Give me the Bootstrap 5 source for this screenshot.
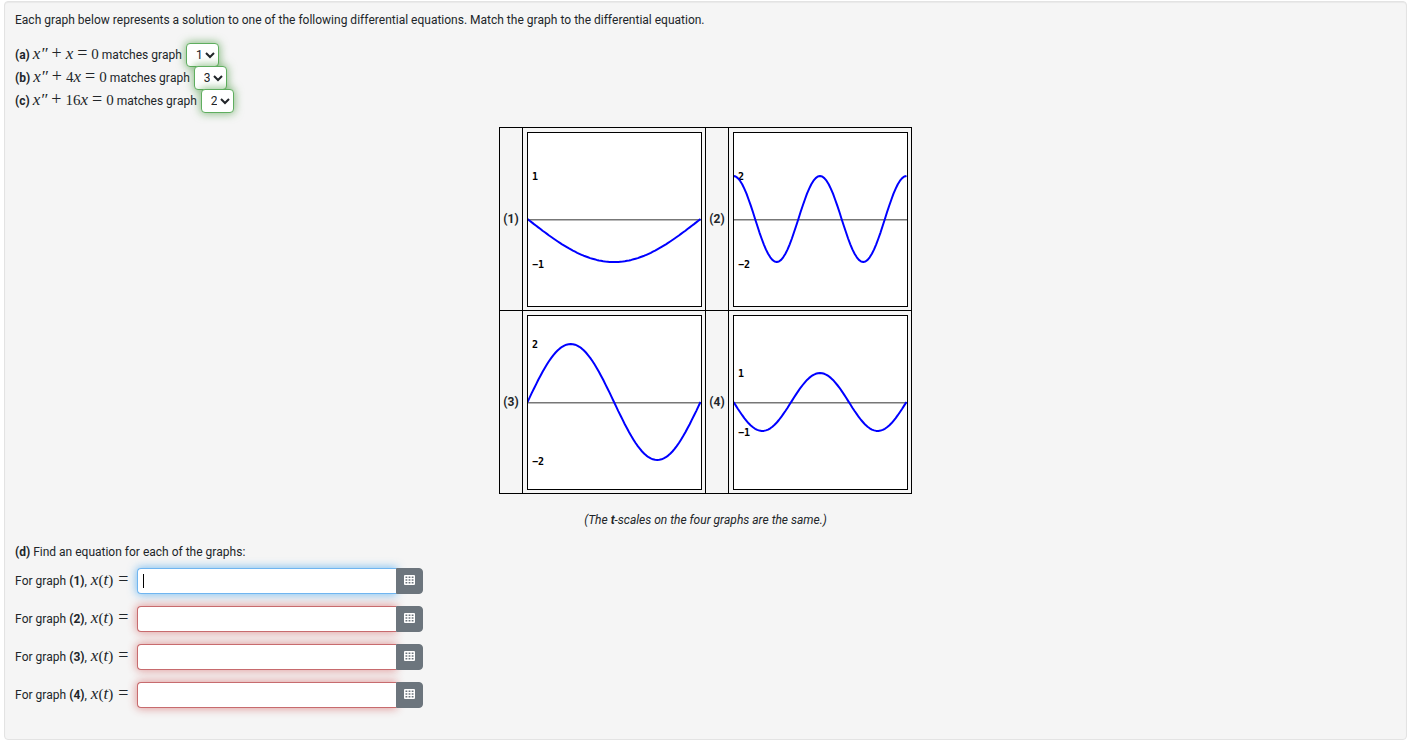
<!DOCTYPE html>
<html lang="en">
<head>
<meta charset="utf-8">
<meta name="viewport" content="width=device-width, initial-scale=1">
<title>Matching solutions of differential equations</title>
<link href="https://cdn.jsdelivr.net/npm/bootstrap@5.3.0/dist/css/bootstrap.min.css" rel="stylesheet">
<style>
body { font-family: Roboto, "Liberation Sans", sans-serif; font-size: 12px; line-height: 18px; color: #212529; background: #fff; font-kerning: none; }
.problem { margin: 1px 1px 0 4px; padding: 9px 10px 31px; background: #f5f5f5; border: 1px solid #e3e3e3; border-radius: 4px; box-shadow: inset 0 1px 1px rgba(0,0,0,.05); }
.matches { margin: 14px 0 15px; }
.match-row { height: 23px; }
.eq { font-family: "Liberation Serif", serif; font-size: 15px; gap: 4px; margin: 0 3px; }
.eq i { font-size: 17px; }
.eq .op { font-size: 18px; line-height: 16px; }
.match-row select { width: 33px; height: 24px; margin-left: 4px; padding: 0 0 0 5px; font-size: 12px; color: #212529; background: #fff; border: 1px solid #5fae5f; border-radius: 4px; box-shadow: 0 0 8px 1px rgba(70,150,60,.6); }
.graphs { border-collapse: collapse; }
.graphs th, .graphs td { border: 1px solid #000; }
.graphs th { width: 23px; text-align: center; padding: 0; }
.graphs td { padding: 4px 3px 3px 4px; }
.plot { display: block; width: 175px; height: 175px; background: #fff; border: 1px solid #000; }
.plot text { font: bold 10px "DejaVu Sans Mono", monospace; fill: #000; }
.plot .axis { stroke: #777; stroke-width: 1.4; }
.plot polyline { fill: none; stroke: #00f; stroke-width: 2; stroke-linejoin: round; }
.note { margin: 17px 0 14px; }
.answers { margin-top: 7px; gap: 12px; }
.answer-row label { width: 122px; padding-bottom: 2px; }
.answer-row .eq { gap: 5px; margin-left: 4px; }
.answer-row .form-control { flex: 0 0 259px; height: 26px; padding: 0 5px; font-size: 12px; border: 1px solid #c76b6e; border-right: 0; border-radius: 4px 0 0 4px; box-shadow: 0 0 8px 1px rgba(200,50,50,.45); }
.answer-row .form-control:focus, .answer-row .form-control.current { border-color: #70b5f0; box-shadow: 0 0 8px 1px rgba(80,170,240,.7); }
.answer-row .form-control.current { background: linear-gradient(#000, #000) 5px 5px / 1px 14px no-repeat #fff; caret-color: transparent; }
.answer-row .btn { width: 27px; height: 26px; padding: 0 0 2px; background: #6c757d; border: 1px solid #6c757d; border-radius: 0 4px 4px 0; z-index: 1; }
</style>
</head>
<body>
<main class="problem">
  <p class="m-0">Each graph below represents a solution to one of the following differential equations. Match the graph to the differential equation.</p>
  <div class="matches">
    <div class="match-row d-flex align-items-center"><label class="d-flex align-items-baseline" for="ma"><b>(a)</b><span class="eq d-inline-flex align-items-baseline"><i>x″</i><span class="op">+</span><i>x</i><span class="op">=</span><span>0</span></span>matches graph</label><select id="ma"><option>1</option><option>2</option><option>3</option><option>4</option></select></div>
    <div class="match-row d-flex align-items-center"><label class="d-flex align-items-baseline" for="mb"><b>(b)</b><span class="eq d-inline-flex align-items-baseline"><i>x″</i><span class="op">+</span><span>4<i>x</i></span><span class="op">=</span><span>0</span></span>matches graph</label><select id="mb"><option>1</option><option>2</option><option selected>3</option><option>4</option></select></div>
    <div class="match-row d-flex align-items-center"><label class="d-flex align-items-baseline" for="mc"><b>(c)</b><span class="eq d-inline-flex align-items-baseline"><i>x″</i><span class="op">+</span><span>16<i>x</i></span><span class="op">=</span><span>0</span></span>matches graph</label><select id="mc"><option>1</option><option selected>2</option><option>3</option><option>4</option></select></div>
  </div>
  <table class="graphs mx-auto">
    <tr>
      <th scope="row">(1)</th>
      <td><svg class="plot" viewBox="0 0 173 173" data-amp="-43" data-periods="0.5" data-phase="0"><path class="axis" d="M0 86.7H173"/><text x="4" y="47">1</text><text x="4" y="135">−1</text><polyline/></svg></td>
      <th scope="row">(2)</th>
      <td><svg class="plot" viewBox="0 0 173 173" data-amp="43" data-periods="2" data-phase="0.25"><path class="axis" d="M0 86.7H173"/><text x="4" y="47">2</text><text x="4" y="135">−2</text><polyline/></svg></td>
    </tr>
    <tr>
      <th scope="row">(3)</th>
      <td><svg class="plot" viewBox="0 0 173 173" data-amp="58" data-periods="1" data-phase="0"><path class="axis" d="M0 86.7H173"/><text x="4" y="32">2</text><text x="4" y="149">−2</text><polyline/></svg></td>
      <th scope="row">(4)</th>
      <td><svg class="plot" viewBox="0 0 173 173" data-amp="-29" data-periods="1.5" data-phase="0"><path class="axis" d="M0 86.7H173"/><text x="4" y="61">1</text><text x="4" y="120">−1</text><polyline/></svg></td>
    </tr>
  </table>
  <p class="note text-center fst-italic">(The <b>t</b>-scales on the four graphs are the same.)</p>
  <p class="m-0"><b>(d)</b> Find an equation for each of the graphs:</p>
  <div class="answers d-flex flex-column">
    <div class="answer-row d-flex align-items-center"><label for="x1" class="d-flex align-items-baseline">For graph&nbsp;<b>(1)</b>,<span class="eq d-inline-flex align-items-baseline"><span><i>x</i>(<i>t</i>)</span><span class="op">=</span></span></label><input id="x1" class="form-control current" type="text"><button class="btn d-flex align-items-center justify-content-center" type="button" aria-label="Equation editor"><svg width="11" height="10" viewBox="0 0 11 10"><use href="#pad"/></svg></button></div>
    <div class="answer-row d-flex align-items-center"><label for="x2" class="d-flex align-items-baseline">For graph&nbsp;<b>(2)</b>,<span class="eq d-inline-flex align-items-baseline"><span><i>x</i>(<i>t</i>)</span><span class="op">=</span></span></label><input id="x2" class="form-control" type="text"><button class="btn d-flex align-items-center justify-content-center" type="button" aria-label="Equation editor"><svg width="11" height="10" viewBox="0 0 11 10"><use href="#pad"/></svg></button></div>
    <div class="answer-row d-flex align-items-center"><label for="x3" class="d-flex align-items-baseline">For graph&nbsp;<b>(3)</b>,<span class="eq d-inline-flex align-items-baseline"><span><i>x</i>(<i>t</i>)</span><span class="op">=</span></span></label><input id="x3" class="form-control" type="text"><button class="btn d-flex align-items-center justify-content-center" type="button" aria-label="Equation editor"><svg width="11" height="10" viewBox="0 0 11 10"><use href="#pad"/></svg></button></div>
    <div class="answer-row d-flex align-items-center"><label for="x4" class="d-flex align-items-baseline">For graph&nbsp;<b>(4)</b>,<span class="eq d-inline-flex align-items-baseline"><span><i>x</i>(<i>t</i>)</span><span class="op">=</span></span></label><input id="x4" class="form-control" type="text"><button class="btn d-flex align-items-center justify-content-center" type="button" aria-label="Equation editor"><svg width="11" height="10" viewBox="0 0 11 10"><use href="#pad"/></svg></button></div>
  </div>
</main>
<svg class="position-absolute" width="0" height="0" aria-hidden="true"><symbol id="pad" viewBox="0 0 11 10"><path fill="#fff" fill-rule="evenodd" d="M1 0H10Q11 0 11 1V9Q11 10 10 10H1Q0 10 0 9V1Q0 0 1 0ZM1.5 1.5V3H3.3V1.5ZM4.6 1.5V3H6.4V1.5ZM7.7 1.5V3H9.5V1.5ZM1.5 4.2V5.8H3.3V4.2ZM4.6 4.2V5.8H6.4V4.2ZM7.7 4.2V5.8H9.5V4.2ZM1.5 7V8.5H3.3V7ZM4.6 7V8.5H6.4V7ZM7.7 7V8.5H9.5V7Z"/></symbol></svg>
<script src="https://cdn.jsdelivr.net/npm/bootstrap@5.3.0/dist/js/bootstrap.bundle.min.js"></script>
<script>
// Sample each sinusoid at even steps across its plot
document.querySelectorAll('.plot').forEach(function (p) {
  var pts = [], n = 80, d = p.dataset;
  for (var i = 0; i <= n; i++) {
    var y = 86 - d.amp * Math.sin(2 * Math.PI * (d.periods * i / n + +d.phase));
    pts.push((173 * i / n - 0.5).toFixed(1) + ',' + y.toFixed(1));
  }
  p.querySelector('polyline').setAttribute('points', pts.join(' '));
});
</script>
</body>
</html>
